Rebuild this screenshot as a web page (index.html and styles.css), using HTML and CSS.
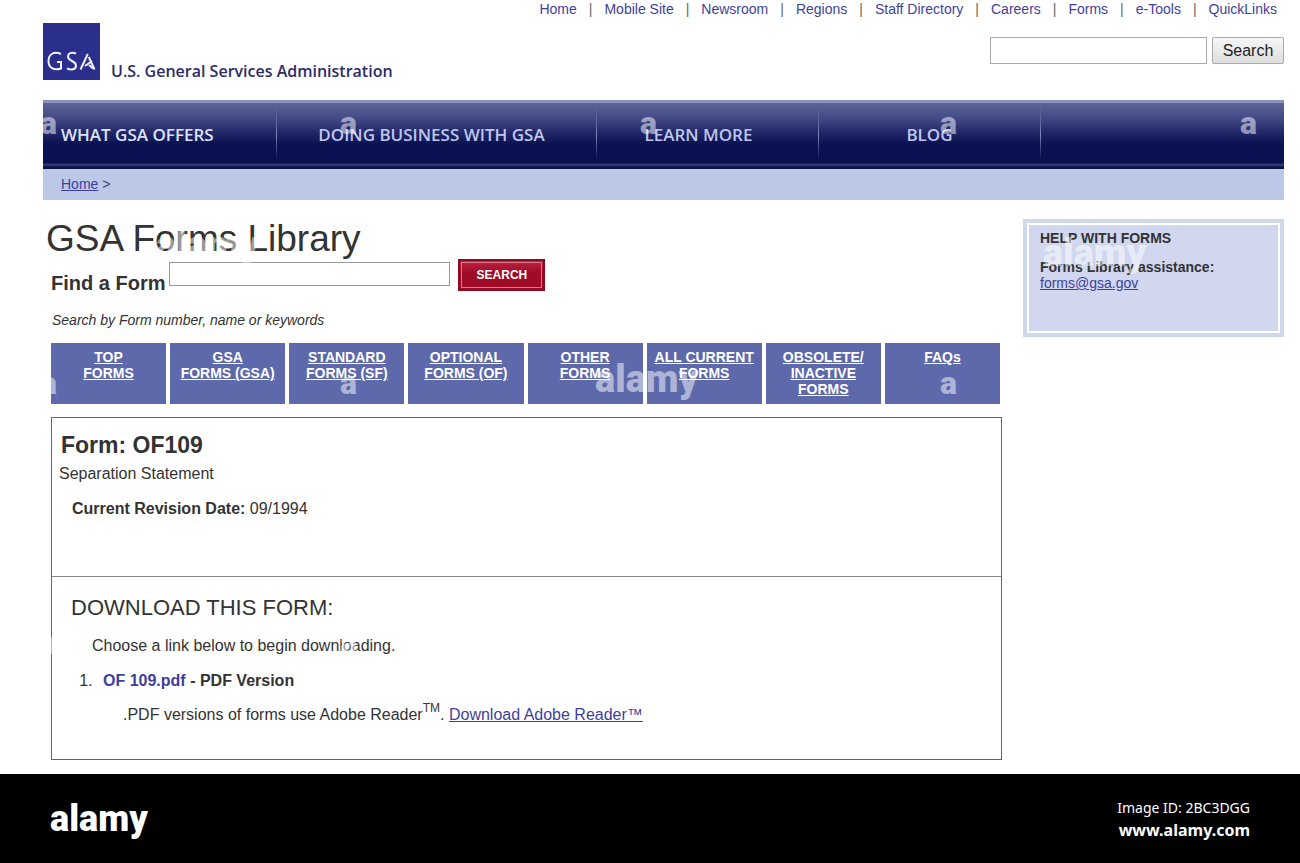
FILE: index.html
```html
<!DOCTYPE html>
<html lang="en">
<head>
    <meta charset="UTF-8">
    <meta name="viewport" content="width=device-width, initial-scale=1.0">
    <title>GSA Forms Library</title>
    <link rel="stylesheet" href="styles.css">
</head>
<body>
<div class="page">
    <header class="header">
        <div class="brand">
            <svg class="logo" viewBox="0 0 57 57" role="img" aria-label="GSA">
                <rect width="57" height="57" fill="#2b2f8c"/>
                <g fill="none" stroke="#eef1ff" stroke-width="2">
                    <path d="M18 31C11 27.500 5.500 31.500 5.500 38S10.500 48 18 45.500V39H14"/>
                    <path d="M33 30.500C28 28.500 25 30.500 25 33.500C25 38.500 33 37.500 33 42.500C33 47 28 47 24 45.500"/>
                    <path d="M37.500 46.500L44.800 31M45.800 34L51.500 46.500M42 43L49 38M46 42L50 45.500"/>
                </g>
            </svg>
            <span class="brand-name">U.S. General Services Administration</span>
        </div>
        <div class="header-right">
            <nav class="top-links">
                <a href="#">Home</a><span>|</span>
                <a href="#">Mobile Site</a><span>|</span>
                <a href="#">Newsroom</a><span>|</span>
                <a href="#">Regions</a><span>|</span>
                <a href="#">Staff Directory</a><span>|</span>
                <a href="#">Careers</a><span>|</span>
                <a href="#">Forms</a><span>|</span>
                <a href="#">e-Tools</a><span>|</span>
                <a href="#">QuickLinks</a>
            </nav>
            <form class="site-search">
                <input type="text" aria-label="Search the site">
                <button type="button">Search</button>
            </form>
        </div>
    </header>

    <nav class="main-nav">
        <a href="#" class="offers">WHAT GSA OFFERS</a>
        <a href="#" class="business">DOING BUSINESS WITH GSA</a>
        <a href="#" class="learn">LEARN MORE</a>
        <a href="#">BLOG</a>
    </nav>
    <div class="breadcrumb"><a href="#">Home</a> &gt;</div>

    <div class="columns">
        <main class="main">
            <h1>GSA Forms Library</h1>
            <form class="find-form">
                <label for="formSearch">Find a Form</label>
                <input type="text" id="formSearch">
                <button type="button">SEARCH</button>
            </form>
            <p class="hint">Search by Form number, name or keywords</p>

            <nav class="tabs">
                <a href="#">TOP<br>FORMS</a>
                <a href="#">GSA<br>FORMS (GSA)</a>
                <a href="#">STANDARD<br>FORMS (SF)</a>
                <a href="#">OPTIONAL<br>FORMS (OF)</a>
                <a href="#">OTHER<br>FORMS</a>
                <a href="#">ALL CURRENT<br>FORMS</a>
                <a href="#">OBSOLETE/<br>INACTIVE<br>FORMS</a>
                <a href="#">FAQs</a>
            </nav>

            <div class="form-box">
                <section class="details">
                    <h2>Form: OF109</h2>
                    <p class="form-title">Separation Statement</p>
                    <p class="revision"><b>Current Revision Date:</b> 09/1994</p>
                </section>
                <section class="download">
                    <h3>DOWNLOAD THIS FORM:</h3>
                    <p class="choose">Choose a link below to begin downloading.</p>
                    <ol>
                        <li><b><a href="#">OF 109.pdf</a> - PDF Version</b></li>
                    </ol>
                    <p class="reader">.PDF versions of forms use Adobe Reader<sup>TM</sup>. <a href="#">Download Adobe Reader™</a></p>
                </section>
            </div>
        </main>

        <aside class="help">
            <div class="help-inner">
                <h4>HELP WITH FORMS</h4>
                <h4 class="assist">Forms Library assistance:</h4>
                <a href="#">forms@gsa.gov</a>
            </div>
        </aside>
    </div>

    <!-- watermark laid over the page -->
    <div class="watermark" aria-hidden="true">
        <span class="c1 r1">a</span>
        <span class="c2 r1">a</span>
        <span class="c3 r1">a</span>
        <span class="c4 r1">a</span>
        <span class="c5 r1">a</span>
        <span class="c1 r3">a</span>
        <span class="c2 r3">a</span>
        <span class="c4 r3">a</span>
        <span class="c1 r5">a</span>
        <span class="c2 r5">a</span>
        <span class="big title-mark">alamy</span>
        <span class="big tabs-mark">alamy</span>
        <span class="big help-mark">alamy</span>
    </div>
</div>

<footer class="footer">
    <span class="alamy">alamy</span>
    <div class="image-id">
        <span>Image ID: 2BC3DGG</span>
        <b>www.alamy.com</b>
    </div>
</footer>
</body>
</html>
```
FILE: styles.css
```css
* {
    margin: 0;
    padding: 0;
    box-sizing: border-box;
}

body {
    display: flex;
    flex-direction: column;
    min-height: 100vh;
    background: #fff;
    color: #333;
    font-family: "Liberation Sans", Arial, sans-serif;
    font-size: 16px;
    line-height: 20px;
}

a {
    color: #3f3f9c;
}

.page {
    position: relative;
    padding: 0 16px 14px 43px;
}

.header {
    display: flex;
    justify-content: space-between;
    height: 100px;
}

.brand {
    display: flex;
    align-items: flex-end;
    gap: 11px;
    height: 80px;
}

.logo {
    width: 57px;
    height: 57px;
}

.brand-name {
    color: #2c2c66;
    font-family: "Open Sans", sans-serif;
    font-weight: 600;
    font-size: 16px;
    line-height: 18px;
}

.header-right {
    display: flex;
    flex-direction: column;
    align-items: flex-end;
    gap: 19px;
}

.top-links {
    display: flex;
    gap: 12px;
    padding-right: 7px;
    color: #666;
    font-size: 14px;
    line-height: 18px;
}

.top-links a {
    text-decoration: none;
}

.site-search {
    display: flex;
    gap: 5px;
}

.site-search input {
    width: 217px;
    height: 27px;
    border: 1px solid #aaa;
    padding: 0 4px;
}

.site-search button {
    width: 72px;
    height: 27px;
    border: 1px solid #aaa;
    border-radius: 2px;
    background: linear-gradient(#f6f6f6, #dedede);
    color: #222;
    font-family: inherit;
    font-size: 16px;
}

.main-nav {
    display: grid;
    grid-template-columns: 234px 320px 222px 222px 1fr;
    height: 69px;
    border-top: 3px solid #8b90bd;
    border-bottom: 2px solid #10143f;
    background: linear-gradient(#5c6698, #444b87 22%, #1f2565 48%, #0a1150 65%, #0a1150 94%, #394078 96%, #0a1150);
}

.main-nav a {
    display: flex;
    align-items: center;
    justify-content: center;
    border-right: 1px solid;
    border-image: linear-gradient(transparent 5%, #8088bb 50%, transparent 88%) 1;
    color: #bfc6ee;
    font-family: "Open Sans", sans-serif;
    font-weight: 600;
    font-size: 17px;
    text-decoration: none;
}

.main-nav .offers {
    justify-content: flex-start;
    padding-left: 18px;
    color: #dde2fa;
}

.main-nav .business {
    padding-right: 10px;
}

.main-nav .learn {
    padding-right: 18px;
}

.breadcrumb {
    padding: 5px 18px 6px;
    background: #bbc8e7;
    color: #3f3f7c;
    font-size: 14px;
}

.columns {
    display: flex;
    gap: 21px;
    padding-top: 19px;
}

.main {
    flex: 1;
}

.main h1 {
    padding-left: 3px;
    font-size: 37px;
    font-weight: normal;
    line-height: 40px;
}

.find-form {
    display: flex;
    height: 32px;
    padding-left: 8px;
}

.find-form label {
    padding-top: 14px;
    font-size: 20px;
    font-weight: bold;
}

.find-form input {
    width: 281px;
    height: 24px;
    margin: 3px 8px 0 4px;
    padding: 0 4px;
    border: 1px solid #999;
}

.find-form button {
    width: 87px;
    height: 32px;
    border: 2px solid #8a0a24;
    outline: 1px solid #d8788c;
    outline-offset: -4px;
    background: linear-gradient(#bd2440, #a00c28 40%, #a00c28);
    color: #fff;
    font-family: inherit;
    font-size: 12px;
    font-weight: bold;
}

.hint {
    padding: 19px 9px 13px;
    font-size: 14px;
    font-style: italic;
}

.tabs {
    display: grid;
    grid-template-columns: repeat(8, 1fr);
    gap: 4px;
    padding: 0 2px 0 8px;
}

.tabs a {
    min-height: 61px;
    padding: 6px 0;
    background: #5d69ab;
    color: #fff;
    font-size: 14px;
    font-weight: bold;
    line-height: 16px;
    text-align: center;
}

.form-box {
    margin: 13px 0 0 8px;
    border: 1px solid #666;
}

.details {
    height: 159px;
    padding: 14px 7px;
    border-bottom: 1px solid #888;
}

.details h2 {
    padding-left: 2px;
    font-size: 23px;
    line-height: 26px;
}

.form-title {
    padding: 6px 0;
}

.revision {
    padding: 9px 13px;
}

.download {
    padding: 18px 19px 34px;
}

.download h3 {
    font-size: 22px;
    font-weight: normal;
    line-height: 26px;
}

.choose {
    padding: 15px 21px;
}

.download ol {
    padding-left: 26px;
}

.download li {
    padding-left: 6px;
}

.download li a {
    text-decoration: none;
}

.reader {
    padding: 14px 52px 0;
}

.reader sup {
    font-size: 12px;
    line-height: 0;
    vertical-align: 8px;
}

.help {
    align-self: flex-start;
    width: 261px;
    padding: 4px;
    background: #d0d9eb;
}

.help-inner {
    min-height: 110px;
    padding: 5px 11px;
    border: 2px solid #fff;
    background: #d0d7ef;
    font-size: 14px;
    line-height: 16px;
}

.help h4 {
    font-size: 14px;
}

.help .assist {
    padding-top: 13px;
}

.watermark {
    color: rgba(255, 255, 255, 0.5);
    font-family: Roboto, sans-serif;
    font-weight: 900;
    font-size: 32px;
    line-height: 32px;
    pointer-events: none;
}

.watermark span {
    position: absolute;
}

.c1 {
    left: 40px;
}

.c2 {
    left: 340px;
}

.c3 {
    left: 640px;
}

.c4 {
    left: 940px;
}

.c5 {
    left: 1240px;
}

.r1 {
    top: 107px;
}

.r3 {
    top: 367px;
}

.r5 {
    top: 627px;
}

.watermark .big {
    font-size: 38px;
    line-height: 46px;
}

.title-mark {
    left: 156px;
    top: 222px;
}

.tabs-mark {
    left: 595px;
    top: 356px;
}

.help-mark {
    left: 1043px;
    top: 230px;
}

.footer {
    flex: 1;
    display: flex;
    align-items: center;
    justify-content: space-between;
    min-height: 89px;
    padding: 0 50px;
    background: #000;
    color: #fff;
}

.alamy {
    font-family: Roboto, sans-serif;
    font-weight: 900;
    font-size: 36px;
    line-height: 40px;
}

.image-id {
    display: flex;
    flex-direction: column;
    align-items: flex-end;
    font-family: "Noto Sans", sans-serif;
    font-size: 14px;
    line-height: 23px;
}

.image-id b {
    font-size: 16px;
}
```
